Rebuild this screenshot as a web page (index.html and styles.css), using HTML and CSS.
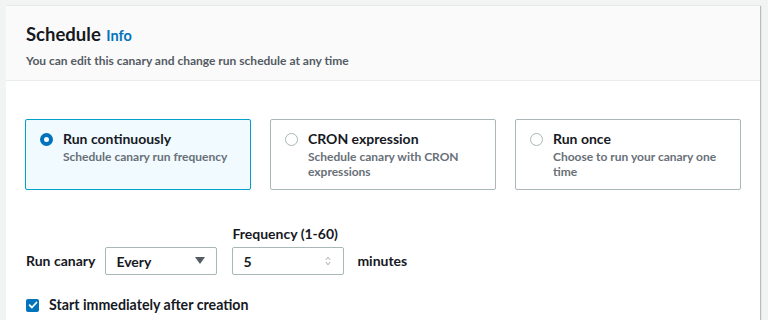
FILE: index.html
```html
<!DOCTYPE html>
<html>
<head>
<meta charset="utf-8">
<link rel="stylesheet" href="styles.css">
</head>
<body>
<div class="panel">
  <div class="panel-header">
    <h2 class="title">Schedule <a class="info">Info</a></h2>
    <p class="desc">You can edit this canary and change run schedule at any time</p>
  </div>
  <div class="panel-body">
    <div class="tiles">
      <div class="tile selected">
        <span class="radio checked"></span>
        <div class="tile-text">
          <div class="tile-title">Run continuously</div>
          <div class="tile-desc">Schedule canary run frequency</div>
        </div>
      </div>
      <div class="tile">
        <span class="radio"></span>
        <div class="tile-text">
          <div class="tile-title">CRON expression</div>
          <div class="tile-desc">Schedule canary with CRON expressions</div>
        </div>
      </div>
      <div class="tile">
        <span class="radio"></span>
        <div class="tile-text">
          <div class="tile-title">Run once</div>
          <div class="tile-desc">Choose to run your canary one time</div>
        </div>
      </div>
    </div>
    <div class="run-row">
      <div class="run-label">Run canary</div>
      <div class="select">
        <span>Every</span>
        <svg class="caret" width="10" height="7" viewBox="0 0 10 7"><path d="M0 0h10L5 7z" fill="#545b64"/></svg>
      </div>
      <div class="field">
        <div class="field-label">Frequency (1-60)</div>
        <div class="input">
          <span>5</span>
          <svg class="spin" width="6" height="10" viewBox="0 0 6 10"><path d="M0.8 4L3 1.2 5.2 4M0.8 6L3 8.8 5.2 6" fill="none" stroke="#9aa0a6" stroke-width="0.9"/></svg>
        </div>
      </div>
      <div class="unit">minutes</div>
    </div>
    <label class="check-row">
      <span class="checkbox">
        <svg width="12" height="12" viewBox="0 0 12 12"><path d="M2.6 6.2l2.3 2.3 4.6-5" fill="none" stroke="#fff" stroke-width="1.8" stroke-linecap="round" stroke-linejoin="round"/></svg>
      </span>
      <span class="check-text">Start immediately after creation</span>
    </label>
  </div>
</div>
</body>
</html>
```

FILE: styles.css
```css
html, body {
  margin: 0;
  padding: 0;
  background: #f2f3f3;
}
body {
  font-family: Lato, "Open Sans", "Liberation Sans", sans-serif;
  color: #16191f;
  padding: 6px 8px 0 6px;
  height: 320px;
  box-sizing: border-box;
  overflow: hidden;
}
.panel {
  background: #fff;
  box-shadow: 1px 0 1px rgba(0,28,36,0.25);
  height: 330px;
}
.panel-header {
  background: #fafafa;
  border-bottom: 1px solid #eaeded;
  padding: 17px 20px 0 20px;
  height: 57px;
}
.title {
  margin: 0;
  font-size: 18.5px;
  font-weight: 700;
  line-height: 22px;
}
.info {
  color: #0073bb;
  font-size: 14.5px;
  font-weight: 700;
  margin-left: 1px;
}
.desc {
  margin: 6px 0 0 0;
  font-size: 12px;
  font-weight: 700;
  color: #545b64;
  line-height: 16px;
}
.panel-body {
  padding: 38px 19px 0 19px;
}
.tiles {
  display: grid;
  grid-template-columns: repeat(3, 1fr);
  gap: 19px;
  width: 716px;
}
.tile {
  display: flex;
  border: 1px solid #aab7b8;
  border-radius: 2px;
  padding: 10px 14px;
  box-sizing: border-box;
  height: 71px;
  gap: 10px;
}
.tile.selected {
  border-color: #00a1c9;
  background: #f1faff;
}
.radio {
  width: 13px;
  height: 13px;
  border: 1.5px solid #aab7b8;
  border-radius: 50%;
  box-sizing: border-box;
  flex: none;
  margin-top: 2.5px;
  background: #fff;
}
.radio.checked {
  border: 4.5px solid #0073bb;
}
.tile-title {
  font-size: 14px;
  font-weight: 700;
  line-height: 18px;
}
.tile-desc {
  font-size: 12px;
  font-weight: 700;
  color: #687078;
  line-height: 15px;
  margin-top: 1px;
}
.run-row {
  display: flex;
  align-items: flex-end;
  margin-top: 35px;
  padding-left: 1px;
}
.run-label {
  font-size: 14px;
  font-weight: 700;
  line-height: 28px;
  margin-right: 10px;
}
.select {
  width: 112px;
  height: 28px;
  box-sizing: border-box;
  border: 1px solid #aab7b8;
  border-radius: 2px;
  display: flex;
  align-items: center;
  justify-content: space-between;
  padding: 0 11px 0 10px;
  font-size: 14px;
  font-weight: 700;
  margin-right: 15px;
}
.caret { margin-top: -1px; }
.field-label {
  font-size: 14px;
  font-weight: 700;
  line-height: 18px;
  margin-bottom: 4px;
}
.input {
  width: 112px;
  height: 28px;
  box-sizing: border-box;
  border: 1px solid #aab7b8;
  border-radius: 2px;
  display: flex;
  align-items: center;
  justify-content: space-between;
  padding: 0 12px 0 10px;
  font-size: 14px;
  font-weight: 700;
}
.unit {
  font-size: 14px;
  font-weight: 700;
  line-height: 28px;
  margin-left: 13px;
}
.check-row {
  display: flex;
  align-items: center;
  margin-top: 21px;
  padding-left: 1px;
  gap: 10px;
}
.checkbox {
  width: 13px;
  height: 13px;
  background: #0073bb;
  border-radius: 2px;
  display: flex;
  align-items: center;
  justify-content: center;
}
.check-text {
  font-size: 14.2px;
  font-weight: 700;
  line-height: 18px;
}
```
